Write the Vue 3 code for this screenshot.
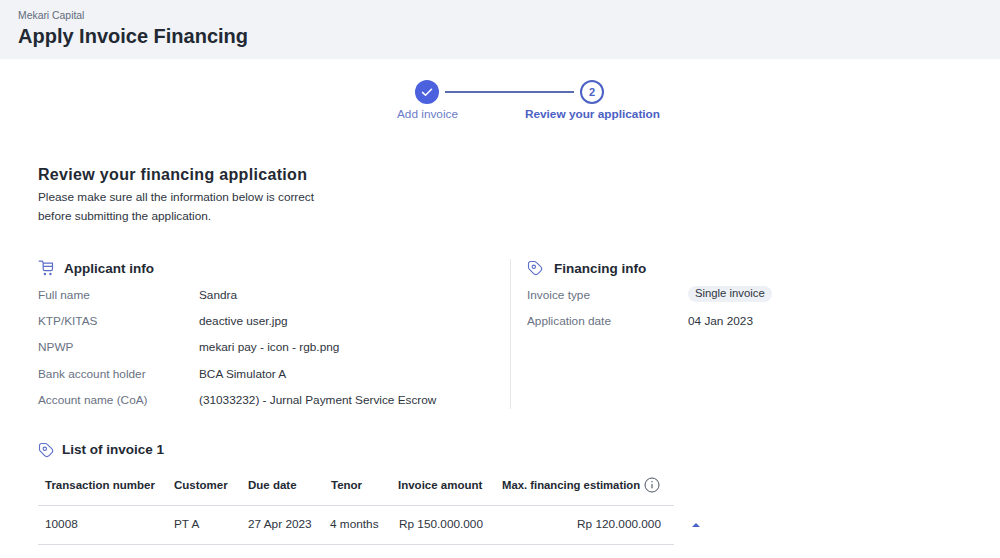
<template>
  <div class="page">
    <header class="page-header">
      <div class="crumb">Mekari Capital</div>
      <h1>Apply Invoice Financing</h1>
    </header>

    <div class="stepper">
      <div class="step-icons">
        <span class="dot done">
          <svg width="12" height="12" viewBox="0 0 12 12" fill="none" aria-hidden="true">
            <path d="M1.500 6.400 4.500 9.200 10.500 3.200" stroke="#fff" stroke-width="1.500" stroke-linecap="round" stroke-linejoin="round" />
          </svg>
        </span>
        <span class="line"></span>
        <span class="dot current">2</span>
      </div>
      <div class="step-labels">
        <span class="label-done">Add invoice</span>
        <span class="label-current">Review your application</span>
      </div>
    </div>

    <section class="intro">
      <h2>Review your financing application</h2>
      <p>Please make sure all the information below is correct<br />before submitting the application.</p>
    </section>

    <section class="info">
      <div class="applicant">
        <div class="section-title">
          <svg class="cart" width="16" height="16" viewBox="0 0 16 16" fill="none" aria-hidden="true">
            <path d="M1.200 1.200h3.300l.7 2h9.300v5.800c0 1-.7 1.700-1.700 1.700H6.900c-1 0-1.700-.7-1.700-1.700V3.200M5.400 6.300h8.800" stroke="#5c6fc9" stroke-width="1.200" stroke-linecap="round" stroke-linejoin="round" />
            <circle cx="6.900" cy="14" r="1.200" fill="#5c6fc9" />
            <circle cx="12.400" cy="14" r="1.200" fill="#5c6fc9" />
          </svg>
          <strong>Applicant info</strong>
        </div>
        <div v-for="row in applicantRows" :key="row.label" class="info-row">
          <span class="info-label">{{ row.label }}</span>
          <span class="info-value">{{ row.value }}</span>
        </div>
      </div>

      <div class="financing">
        <div class="section-title">
          <svg class="tag" width="16" height="16" viewBox="0 0 16 16" fill="none" aria-hidden="true">
            <path d="M3.600 1.500h3.600c.8 0 1.500.3 2 .8l4.300 4c1.400 1.400 1.400 3.500 0 4.900l-2.200 2.200c-1.400 1.400-3.500 1.400-4.900 0L2.300 9.200c-.5-.5-.8-1.200-.8-2V3.600c0-1.200.9-2.100 2.100-2.100Z" stroke="#5c6fc9" stroke-width="1.100" stroke-linejoin="round" />
            <circle cx="6.800" cy="6.800" r="1.700" stroke="#5c6fc9" stroke-width="1.100" />
          </svg>
          <strong>Financing info</strong>
        </div>
        <div class="info-row">
          <span class="info-label">Invoice type</span>
          <span class="info-value"><span class="pill">Single invoice</span></span>
        </div>
        <div class="info-row">
          <span class="info-label">Application date</span>
          <span class="info-value">04 Jan 2023</span>
        </div>
      </div>
    </section>

    <section class="invoices">
      <div class="list-title">
        <svg width="16" height="16" viewBox="0 0 16 16" fill="none" aria-hidden="true">
          <path d="M3.600 1.500h3.600c.8 0 1.500.3 2 .8l4.300 4c1.400 1.400 1.400 3.500 0 4.900l-2.200 2.200c-1.400 1.400-3.500 1.400-4.900 0L2.300 9.200c-.5-.5-.8-1.200-.8-2V3.600c0-1.200.9-2.100 2.100-2.100Z" stroke="#5c6fc9" stroke-width="1.100" stroke-linejoin="round" />
          <circle cx="6.800" cy="6.800" r="1.700" stroke="#5c6fc9" stroke-width="1.100" />
        </svg>
        <strong>List of invoice 1</strong>
      </div>
      <div class="table-wrap">
        <table>
          <thead>
            <tr>
              <th class="col-number">Transaction number</th>
              <th class="col-customer">Customer</th>
              <th class="col-due">Due date</th>
              <th class="col-tenor">Tenor</th>
              <th class="col-amount">Invoice amount</th>
              <th class="col-max">
                <span class="max-head">
                  Max. financing estimation
                  <svg width="16" height="16" viewBox="0 0 16 16" fill="none" aria-hidden="true">
                    <circle cx="8" cy="8" r="7" stroke="#4b5563" stroke-width="1" />
                    <path d="M8 7v4.200" stroke="#4b5563" stroke-width="1.100" />
                    <circle cx="8" cy="4.800" r=".7" fill="#4b5563" />
                  </svg>
                </span>
              </th>
            </tr>
          </thead>
          <tbody>
            <tr>
              <td>10008</td>
              <td>PT A</td>
              <td>27 Apr 2023</td>
              <td>4 months</td>
              <td class="amount">Rp 150.000.000</td>
              <td class="right">Rp 120.000.000</td>
            </tr>
          </tbody>
        </table>
        <span class="caret"></span>
      </div>
    </section>
  </div>
</template>

<script setup>
const applicantRows = [
  { label: 'Full name', value: 'Sandra' },
  { label: 'KTP/KITAS', value: 'deactive user.jpg' },
  { label: 'NPWP', value: 'mekari pay - icon - rgb.png' },
  { label: 'Bank account holder', value: 'BCA Simulator A' },
  { label: 'Account name (CoA)', value: '(31033232) - Jurnal Payment Service Escrow' },
];
</script>

<style scoped>
.page {
  height: 558px;
  overflow: hidden;
  background: #fff;
  color: #2e343e;
  font-family: "Liberation Sans", Arial, sans-serif;
  font-size: 11.8px;
}

.page-header {
  height: 59px;
  box-sizing: border-box;
  padding: 10px 18px 0;
  background: #f1f3f7;
}

.crumb {
  font-size: 10.4px;
  line-height: 12px;
  color: #626b79;
}

.page-header h1 {
  margin: 2px 0 0;
  font-size: 20px;
  line-height: 24px;
  font-weight: 700;
  color: #232933;
}

.stepper {
  width: 263px;
  margin: 21px 0 0 397px;
}

.step-icons {
  display: flex;
  align-items: center;
  padding-left: 18px;
}

.dot {
  width: 24px;
  height: 24px;
  box-sizing: border-box;
  border-radius: 50%;
  display: flex;
  align-items: center;
  justify-content: center;
}

.done {
  background: #4b61dd;
}

.current {
  border: 2px solid #4b61c4;
  color: #4b61c4;
  font-size: 11px;
  font-weight: 700;
}

.line {
  width: 129px;
  height: 2px;
  margin: 0 6px;
  background: #5a6db0;
}

.step-labels {
  display: flex;
  justify-content: space-between;
  margin-top: 3px;
  line-height: 14px;
}

.label-done {
  color: #6a7bc8;
}

.label-current {
  color: #4b61c4;
  font-weight: 700;
}

.intro {
  margin: 44px 0 0 38px;
}

.intro h2 {
  margin: 0;
  font-size: 16px;
  line-height: 20px;
  font-weight: 700;
  letter-spacing: 0.32px;
  color: #232933;
}

.intro p {
  margin: 3px 0 0;
  line-height: 19px;
}

.info {
  display: flex;
  align-items: flex-start;
  margin: 33px 0 0 38px;
}

.applicant {
  width: 472px;
}

.financing {
  height: 150px;
  padding-left: 16px;
  border-left: 1px solid #e5e7eb;
}

.section-title {
  display: flex;
  align-items: center;
  gap: 10px;
  height: 18px;
  font-size: 13.5px;
  color: #232933;
}

.financing .section-title {
  gap: 11px;
}

.info-row {
  display: flex;
  height: 26.2px;
  align-items: center;
}

.section-title + .info-row {
  margin-top: 5px;
}

.info-label {
  width: 161px;
  color: #687182;
}

.pill {
  display: inline-block;
  padding: 1px 7px 2px;
  margin-top: -2px;
  border-radius: 9px;
  background: #edf0f4;
  font-size: 11.3px;
  line-height: 13px;
  vertical-align: top;
}

.invoices {
  margin: 28px 0 0 38px;
}

.list-title {
  display: flex;
  align-items: center;
  gap: 8px;
  height: 18px;
  font-size: 13.5px;
  color: #232933;
}

.table-wrap {
  position: relative;
  width: 636px;
  margin-top: 8px;
}

table {
  width: 636px;
  border-collapse: collapse;
  table-layout: fixed;
}

th,
td {
  padding: 0 0 2px;
  text-align: left;
  white-space: nowrap;
}

th {
  height: 36px;
  border-bottom: 1px solid #d9dce1;
  font-size: 11.5px;
  font-weight: 700;
  color: #232933;
}

td {
  height: 36px;
  font-size: 11.8px;
  border-bottom: 1px solid #d9dce1;
}

th:first-child,
td:first-child {
  padding-left: 7px;
}

.col-number { width: 129px; }
.col-customer { width: 74px; }
.col-due { width: 82px; }
.col-tenor { width: 67px; padding-left: 1px; }
.col-amount { width: 104px; }

.col-max {
  font-size: 11.3px;
}

.amount {
  padding-left: 1px;
}

.max-head {
  display: flex;
  align-items: center;
  gap: 4px;
}

.right {
  text-align: right;
  padding-right: 13px;
}

.caret {
  position: absolute;
  left: 654px;
  bottom: 18px;
  width: 0;
  height: 0;
  border-left: 4px solid transparent;
  border-right: 4px solid transparent;
  border-bottom: 4px solid #4b61c4;
}
</style>
